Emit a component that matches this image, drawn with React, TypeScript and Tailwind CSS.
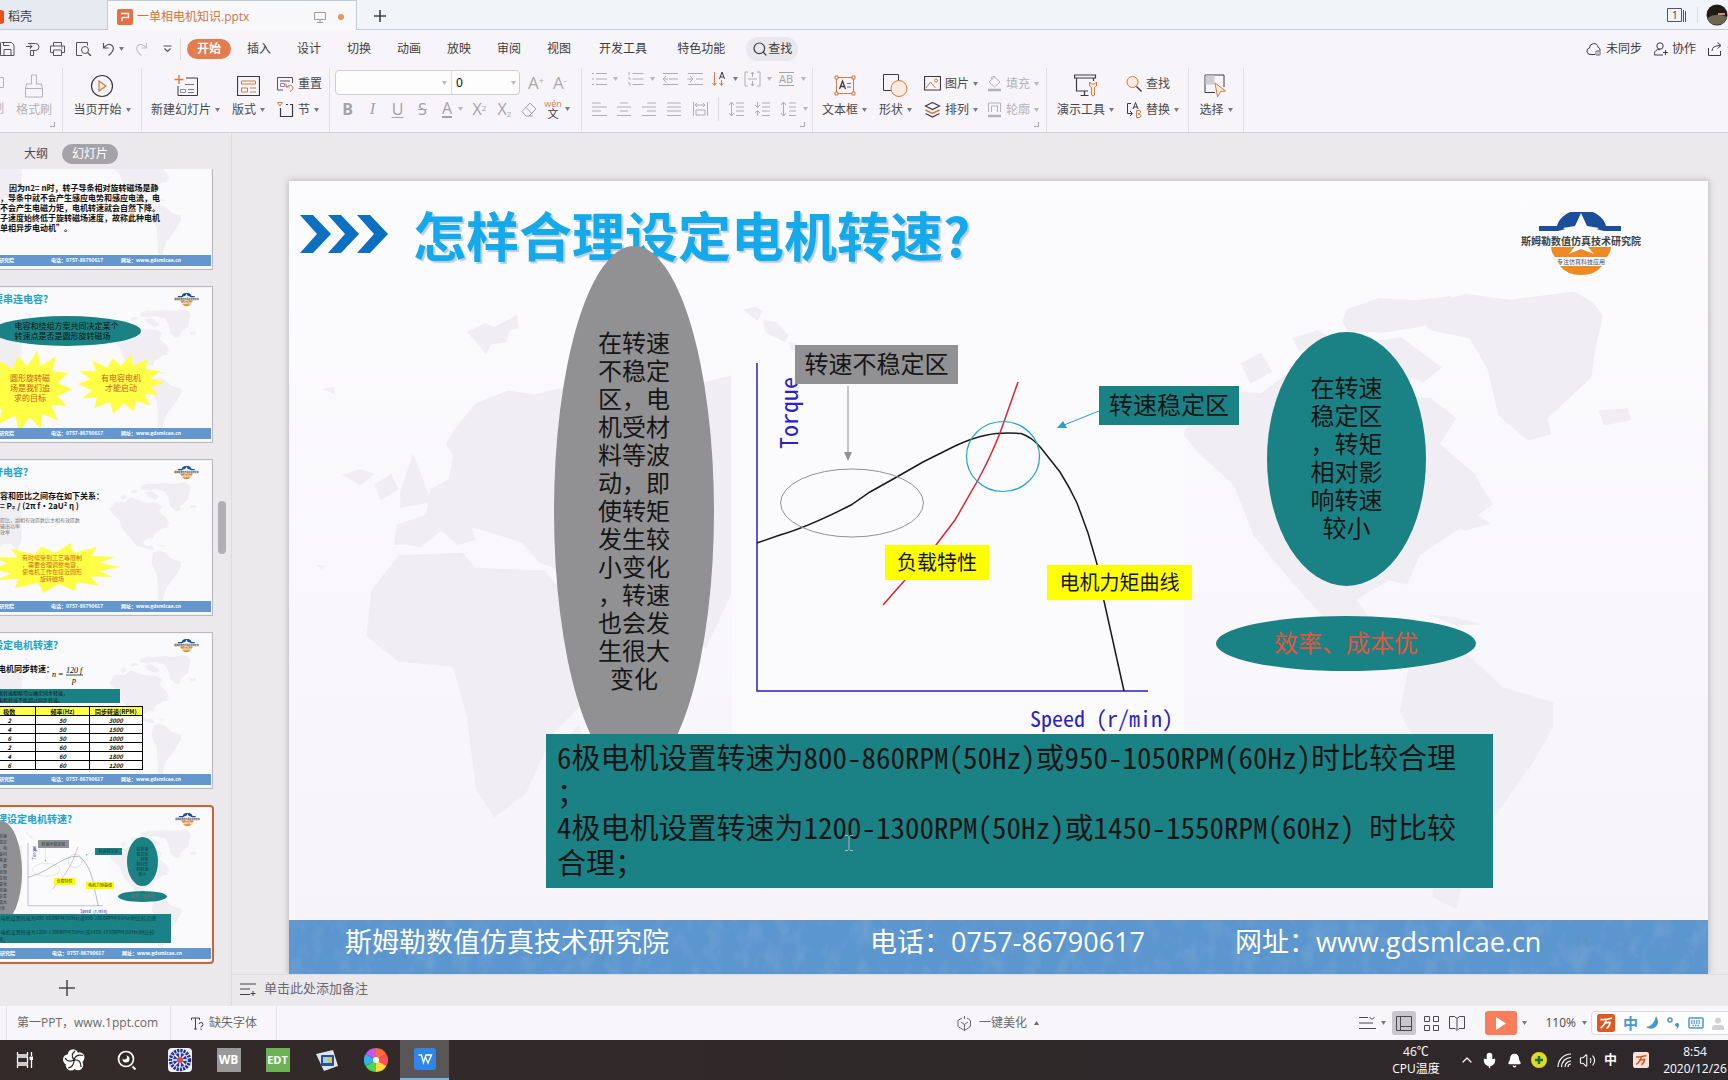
import type { ReactNode } from 'react';
import { Search, Mic, Bell, ChevronUp, Volume2 } from 'lucide-react';

const UI = "font-['Open_Sans','Noto_Sans_CJK_SC',sans-serif]";
const SONG = "font-['Noto_Sans_Mono_CJK_SC','Noto_Sans_CJK_SC',monospace] font-light";

/* ---------- small pieces ---------- */

function Caret({ dim = false }: { dim?: boolean }) {
  return (
    <svg width="5" height="4" viewBox="0 0 5 4" className={`shrink-0 ${dim ? 'text-[#b9b7bb]' : 'text-[#7b797d]'}`}>
      <path d="M0 0h5L2.5 4z" fill="currentColor" />
    </svg>
  );
}

function Ico({ w = 16, h = 16, box, className = '', children }: { w?: number; h?: number; box?: string; className?: string; children: ReactNode }) {
  return (
    <svg width={w} height={h} viewBox={box ?? `0 0 ${w} ${h}`} fill="none" stroke="currentColor" strokeWidth="1" className={`shrink-0 ${className}`}>
      {children}
    </svg>
  );
}

function BigButton({ label, icon, caret = true, dim = false }: { label: string; icon: ReactNode; caret?: boolean; dim?: boolean }) {
  return (
    <button className={`flex flex-col items-center gap-[2px] ${dim ? 'text-[#b4b2b6]' : 'text-[#4a484c]'}`}>
      <span className="flex h-6 items-center">{icon}</span>
      <span className="flex items-center gap-1 whitespace-nowrap leading-5">
        {label}
        {caret && <Caret dim={dim} />}
      </span>
    </button>
  );
}

function SmallButton({ label, icon, caret = true, dim = false }: { label: string; icon: ReactNode; caret?: boolean; dim?: boolean }) {
  return (
    <button className={`flex h-5 items-center gap-1 whitespace-nowrap ${dim ? 'text-[#b4b2b6]' : 'text-[#4a484c]'}`}>
      {icon}
      <span>{label}</span>
      {caret && <Caret dim={dim} />}
    </button>
  );
}

function Corner() {
  return (
    <Ico w={5} h={5} className="absolute bottom-[5px] right-[7px] text-[#a9a7ab]">
      <path d="M4.5 0v4.5H0" />
    </Ico>
  );
}

/* ---------- top bars ---------- */

function TabBar() {
  return (
    <header className="flex h-[30px] shrink-0 border-b border-[#c3ccd4] bg-[#f1f5f9]">
      <button className="flex w-[107px] items-center gap-1 bg-[#e6ebf2] pt-1 text-[12px] text-[#3c3c40]">
        <svg width="4" height="14" viewBox="0 0 4 14"><path d="M0 0a7 7 0 0 1 0 14z" fill="#e8501c" /></svg>
        稻壳
      </button>
      <div className="-mb-px flex w-[250px] items-center border-x border-t border-[#c3ccd4] bg-[#f8f7fa] pl-[9px] pr-3 pt-[2px] text-[12px] text-[#d2743f]">
        <svg width="16" height="16" viewBox="0 0 16 16">
          <rect width="16" height="16" rx="2" fill="#e56f45" />
          <path d="M4 4.500h7.500v4H5M5 8.500V12" stroke="#fff" strokeWidth="1.400" fill="none" />
        </svg>
        <span className="ml-1">一单相电机知识.pptx</span>
        <Ico w={12} h={12} className="ml-auto text-[#9c9a9e]">
          <path d="M.5 1.500h11v7H.5zM6 8.500v2.500M3 11.500h6" />
        </Ico>
        <span className="ml-3 size-[6px] rounded-full bg-[#e2965c]" />
      </div>
      <button aria-label="新建" className="flex w-[46px] items-center justify-center pt-[2px] text-[#444]">
        <Ico w={12} h={12}><path d="M6 0v12M0 6h12" strokeWidth="1.600" /></Ico>
      </button>
      <div className="ml-auto flex items-center">
        <Ico w={22} h={16} className="text-[#4d5563]">
          <path d="M.5 1.500h14v13H.5zM16.500 3v12M18.500 4v11" />
          <text x="5" y="12" fontSize="10" fill="#333" stroke="none" fontFamily="Open Sans, sans-serif">1</text>
        </Ico>
        <span className="ml-2 h-4 w-px bg-[#d6dade]" />
        <svg width="22" height="22" viewBox="0 0 22 22" className="ml-2">
          <circle cx="11" cy="11" r="10.500" fill="#1f1b19" />
          <path d="M1 14q10-6 20-1a10.500 10.500 0 0 1-20 1z" fill="#6b6750" />
          <path d="M12 9h7v2h-7z" fill="#c58f7c" />
        </svg>
      </div>
    </header>
  );
}

const SHORT_TABS = ['插入', '设计', '切换', '动画', '放映', '审阅', '视图'];
const LONG_TABS = ['开发工具', '特色功能'];

function MenuBar() {
  return (
    <nav className="flex h-[38px] shrink-0 items-center overflow-hidden bg-[#f7f5f9] text-[12px] text-[#3d3b3f]">
      <div className="flex w-[181px] shrink-0 items-center border-r border-[#dcdade] py-1 text-[#55535a]">
        <button aria-label="保存" className="w-[25px]"><Ico w={15} h={14}><path d="M1.500.5h10l2.500 2.500v10.500h-13.500V.5M4 13V7.500h7V13M3.500.5v3h6" /></Ico></button>
        <button aria-label="输出" className="w-[25px]"><Ico w={15} h={14}><path d="M3 1.500h7.500a3.500 3.500 0 0 1 0 7H5.500M5.500 8.500v5h3v-5M5.500 3.500v3M1 4.500h6M5 2.500l2 2-2 2" /></Ico></button>
        <button aria-label="打印" className="w-[26px]"><Ico w={15} h={14}><path d="M3.500 4V.5h8V4M3.500 10.500h-3v-6.500h14v6.500h-3M3.500 8h8v5.500h-8zM11 6h1.500" /></Ico></button>
        <button aria-label="预览" className="w-[26px]"><Ico w={16} h={14}><path d="M6 13.500H.5V.5h11v3" /><circle cx="9" cy="8" r="3.500" /><path d="m11.500 10.500 3.500 3.500" strokeWidth="1.400" /></Ico></button>
        <button aria-label="撤销" className="flex w-[33px] items-center gap-1 text-[#55535a]"><Ico w={13} h={14}><path d="M1.500 1v5h5M1.500 6q5-6 9-2 3 4-4 9.500" strokeWidth="1.200" /></Ico><Caret /></button>
        <button aria-label="恢复" className="w-[28px] text-[#c5c3c7]"><Ico w={13} h={14}><path d="M11.500 1v5h-5M11.500 6q-5-6-9-2-3 4 4 9.500" strokeWidth="1.200" /></Ico></button>
        <button aria-label="更多"><Ico w={9} h={8}><path d="M.5 1h8M1.500 3.500l3 3 3-3" strokeWidth="1.200" /></Ico></button>
      </div>
      <button className="ml-[6px] mr-[3px] h-5 w-[44px] shrink-0 rounded-full bg-[#e47c4e] font-bold text-white">开始</button>
      {SHORT_TABS.map((t) => (
        <button key={t} className="shrink-0 px-[13px]">{t}</button>
      ))}
      {LONG_TABS.map((t) => (
        <button key={t} className="shrink-0 px-[15px]">{t}</button>
      ))}
      <button className="ml-[6px] flex h-6 w-[52px] shrink-0 items-center justify-center rounded-full bg-[#e9e8ee]">
        <Search size={16} strokeWidth={1.800} />
        查找
      </button>
      <div className="ml-auto -mr-[23px] flex shrink-0 items-center gap-3">
        <button className="flex items-center gap-1">
          <Ico w={16} h={14}><path d="M9 12.500H4a3.300 3.300 0 0 1-.5-6.500 4.300 4.300 0 0 1 8.500-1 3.500 3.500 0 0 1 2 4" /><circle cx="12" cy="11" r="3" fill="#9a989d" stroke="none" /><path d="M10.500 11h3" stroke="#fff" /></Ico>
          未同步
        </button>
        <button className="flex items-center gap-1">
          <Ico w={14} h={14}><circle cx="6" cy="4" r="3.200" /><path d="M9 13H.5v-1.500q0-4 5.500-4M9 10.500h5M11.500 8v5" /></Ico>
          协作
        </button>
        <button className="flex items-center gap-1">
          <Ico w={15} h={14}><path d="M.5 6v7.500h12V9M4 9q0-5.500 8-5.500M9.500.5l3.500 3-3.500 3" /></Ico>
          分享
        </button>
      </div>
    </nav>
  );
}

function Lines({ d, w = 16 }: { d: string; w?: number }) {
  return <Ico w={w} h={16} className="text-[#b0aeb2]"><path d={d} /></Ico>;
}

function Ribbon() {
  return (
    <div className="flex h-[65px] shrink-0 overflow-hidden border-b border-[#d2d0d4] bg-[#f7f5f9] text-[12px]">
      <section className="relative flex w-[63px] shrink-0 items-center gap-3 border-r border-[#e2e0e4] pb-[7px]">
        <div className="flex w-1 flex-col justify-between gap-3 overflow-hidden text-[#b4b2b6]">
          <Ico w={4} h={12}><path d="M0 .5h3.500v10H0" /></Ico>
          <span className="-ml-2 leading-4">制</span>
        </div>
        <BigButton dim caret={false} label="格式刷" icon={<Ico w={20} h={24}><path d="M7.500 1h5v9h5l1 4.500v8.500H1.500v-8.500l1-4.500h5zM1.500 14.500h17" /></Ico>} />
        <Corner />
      </section>

      <section className="flex w-[79px] shrink-0 items-center justify-center border-r border-[#e2e0e4] pb-[7px]">
        <BigButton label="当页开始" icon={<Ico w={24} h={24}><circle cx="12" cy="12" r="10.500" strokeWidth="1.200" stroke="#3c3a3e" /><path d="M9 7v10l7-5z" stroke="#d07c42" fill="#fbeadd" strokeWidth="1.200" /></Ico>} />
      </section>

      <section className="flex w-[188px] shrink-0 items-center gap-[12px] border-r border-[#e2e0e4] pb-[7px] pl-[9px]">
        <BigButton label="新建幻灯片" icon={<Ico w={24} h={22}><path d="M4 11v9.500h19.500V3H12" stroke="#3c3a3e" /><path d="M5 0v9M.5 4.500h9" stroke="#d07c42" strokeWidth="1.400" /><path d="M11 9.500h9M14 14.500h6M14 17.500h6" stroke="#77757a" /><path d="M6.500 14.500h5v3h-5z" stroke="#8c88b8" /></Ico>} />
        <BigButton label="版式" icon={<Ico w={23} h={20}><path d="M.5.5h22v19H.5z" stroke="#3c3a3e" strokeWidth="1.200" /><path d="M4.500 5h14v3h-14zM4.500 12h6v4h-6zM13 12h6M13 16h6" stroke="#d07c42" /></Ico>} />
        <div className="flex flex-col gap-[6px]">
          <SmallButton caret={false} label="重置" icon={<Ico w={17} h={16}><path d="M6 14H.5V1.500h15V7M3 5h10" stroke="#55535a" /><path d="M3.500 7.500h4v3h-4z" stroke="#8c88b8" /><path d="M9 7.500v3.500h3.500M9 11q6-4 7 1 0 2-3 3.500" stroke="#d07c42" /></Ico>} />
          <SmallButton label="节" icon={<Ico w={17} h={16}><path d="M9 2.500h2M13 2.500h2.500v12h-12V6" stroke="#3c3a3e" strokeWidth="1.200" /><path d="M.5.5h5L3 4z" stroke="#d07c42" /></Ico>} />
        </div>
      </section>

      <section className="relative flex w-[252px] shrink-0 flex-col justify-center gap-[2px] border-r border-[#e2e0e4] pb-[9px] pl-[5px] pr-[5px]">
        <div className="flex items-center">
          <div className="flex h-[25px] w-[185px] items-center rounded-[4px] border border-[#cfcdd1] bg-[#fdfdfe]">
            <select aria-label="字体" className="h-full w-[106px] appearance-none px-1 outline-none"><option></option></select>
            <Caret dim />
            <select aria-label="字号" className="ml-[4px] h-full w-[60px] appearance-none border-l border-[#dcdade] pl-1 outline-none"><option>0</option></select>
            <Caret dim />
          </div>
          <button className="ml-[8px] w-[25px] text-left text-[17px] leading-5 text-[#aaa8ac]">A<sup className="text-[9px]">+</sup></button>
          <button className="text-[17px] leading-5 text-[#aaa8ac]">A<sup className="text-[9px]">-</sup></button>
        </div>
        <div className="flex h-6 items-center text-[16px] leading-5 text-[#a4a2a6]">
          <button className="w-[25px] font-bold">B</button>
          <button className="w-[25px] font-['Liberation_Serif',serif] italic">I</button>
          <button className="w-[25px] underline underline-offset-2">U</button>
          <button className="w-[25px] line-through">S</button>
          <button className="flex w-[32px] items-center gap-[6px] pl-[7px]"><span className="border-b-2 leading-4">A</span><Caret dim /></button>
          <button className="w-[25px]">X<sup className="text-[8px]">2</sup></button>
          <button className="w-[25px]">X<sub className="text-[8px]">2</sub></button>
          <button aria-label="清除" className="flex w-[24px] justify-center"><Ico w={16} h={15}><path d="M9 1 15 7l-7 7H5L1 9.500zM5 5.500l6 6M8 14h4" /></Ico></button>
          <button className="ml-1 flex items-center gap-1">
            <span className="flex w-4 flex-col items-center text-[9px] leading-[10px]"><span className="text-[#d07c42]">wén</span><span className="text-[11px] text-[#3c3a3e]">文</span></span>
            <Caret />
          </button>
        </div>
      </section>

      <section className="relative flex w-[231px] shrink-0 flex-col justify-center gap-[10px] border-r border-[#e2e0e4] pb-[9px] pl-[9px]">
        <div className="flex items-center gap-[6px]">
          <Lines d="M1 2.500h2M1 8h2M1 13.500h2M5 2.500h11M5 8h11M5 13.500h11" /><Caret dim />
          <Lines w={20} d="M5 1v3M4 7h2v2M4 12h2v3M8.500 2.500h11M8.500 8h11M8.500 13.500h11" /><Caret dim />
          <Lines w={18} d="M2 2.500h15M8 8h9M2 13.500h15M5 5 2 8l3 3M2 8h5" />
          <Lines w={20} d="M3 2.500h15M11 8h7M3 13.500h15M5 5l3 3-3 3M2 8h6" />
          <Ico w={16} h={16}><path d="M3.500 1v13M1.500 12l2 2.500 2-2.500M10.500 9v5M8.500 12l2 2.500 2-2.500" stroke="#d07c42" /><path d="M8.500 8l2.500-7 2.500 7M9.500 6h3" stroke="#3c3a3e" /></Ico><Caret />
          <Lines w={17} d="M4 1H1v14h3M13 1h3v14h-3M8.500 1v5M8.500 10v5M4 8h9M7 3l1.500-2L10 3M7 13l1.500 2 1.500-2" /><Caret dim />
          <Ico w={17} h={16} className="text-[#a4a2a6]"><path d="M1 1.500h15M1 14.500h15" /><text x="1" y="12" fontSize="11" fill="currentColor" stroke="none" fontFamily="Open Sans, sans-serif">AB</text></Ico><Caret dim />
        </div>
        <div className="flex items-center gap-[9px]">
          <Lines w={16} d="M1 2h9M1 6h15M1 10h9M1 14.500h15" />
          <Lines w={16} d="M4 2h8M1 6h14M4 10h8M1 14.500h14" />
          <Lines w={16} d="M6 2h9M1 6h14M6 10h9M1 14.500h14" />
          <Lines w={16} d="M1 2h14M1 6h14M1 10h14M1 14.500h14" />
          <Lines w={18} d="M2.500 1v14M16.500 1v14M4 4h10M6 2 4 4l2 2M12 2l2 2-2 2M5 9h9v5H5z" />
          <span className="h-6 w-px bg-[#dcdade]" />
          <Lines w={17} d="M3.500 1v14M1 4l2.500-3L6 4M1 12l2.500 3L6 12M8 2h8M8 6h8M8 10h8M8 14.500h8" />
          <Lines w={17} d="M3.500 1v5M1 4l2.500 2.500L6 4M3.500 15v-5M1 12l2.500-2.500L6 12M8 2h8M8 6h8M8 10h8M8 14.500h8" />
          <span className="flex items-center gap-[6px]"><Lines w={17} d="M3.500 1v14M1 4l2.500-3L6 4M1 12l2.500 3L6 12M9 2h7M9 6h7M9 10h7M9 14.500h7" /><Caret dim /></span>
        </div>
        <Corner />
      </section>

      <section className="relative flex w-[234px] shrink-0 items-center gap-3 border-r border-[#e2e0e4] pb-[7px] pl-[9px]">
        <BigButton label="文本框" icon={<Ico w={22} h={21}><path d="M2.500 2.500h17v16h-17z" stroke="#d07c42" /><path d="M1 1h3v3H1zM18 1h3v3h-3zM1 17h3v3H1zM18 17h3v3h-3z" stroke="#d07c42" fill="#f7f5f9" /><path d="M5.500 14l3-8 3 8M6.500 11.500h4" stroke="#3c3a3e" strokeWidth="1.300" /><path d="M13 8.500h4M13 12h4" stroke="#77757a" /></Ico>} />
        <BigButton label="形状" icon={<Ico w={25} h={24}><path d="M.5.5h15v16H.5z" stroke="#3c3a3e" /><circle cx="16" cy="14.500" r="8" stroke="#d07c42" fill="#fbeadd" /></Ico>} />
        <div className="flex flex-col gap-[6px]">
          <SmallButton label="图片" icon={<Ico w={17} h={15}><path d="M.5.500h16v13.500H.5z" stroke="#3c3a3e" strokeWidth="1.200" /><path d="m2 12 4.500-6 5 6" stroke="#d07c42" /><circle cx="12" cy="4.500" r="1.500" stroke="#d07c42" /></Ico>} />
          <SmallButton label="排列" icon={<Ico w={17} h={16}><path d="M8.500.5 15.500 4l-7 3.500L1.500 4z" stroke="#3c3a3e" strokeWidth="1.200" /><path d="m1.500 8 7 3.500 7-3.500" stroke="#d07c42" strokeWidth="1.500" /><path d="m1.500 11.500 7 3.500 7-3.500" stroke="#3c3a3e" strokeWidth="1.200" /></Ico>} />
        </div>
        <div className="-ml-[3px] flex flex-col gap-[6px]">
          <SmallButton dim label="填充" icon={<Ico w={15} h={16}><path d="m7.500 1 5.500 5-5.500 5L2 6zM5 3.500q-2-3 2.500-3" /><path d="M1 14h13" strokeWidth="2.500" /></Ico>} />
          <SmallButton dim label="轮廓" icon={<Ico w={15} h={16}><path d="M1.500 10V1h12v9M4.500 10V4h6v6" /><path d="M1 14h13" strokeWidth="2.500" /></Ico>} />
        </div>
        <Corner />
      </section>

      <section className="flex w-[142px] shrink-0 items-center gap-3 border-r border-[#e2e0e4] pb-[7px] pl-[10px]">
        <BigButton label="演示工具" icon={<Ico w={24} h={23}><path d="M.5 1h21v3H.5zM2.500 4v13H14M19.500 4v3M10.500 17v4M6.500 21.500h8" stroke="#3c3a3e" strokeWidth="1.200" /><path d="M15.500 8v4l2 1.500V21q1.500 2 3 0v-7.500l2-1.500V8l-2 2h-3z" stroke="#d07c42" fill="#fbeadd" /></Ico>} />
        <div className="flex flex-col gap-[6px]">
          <SmallButton caret={false} label="查找" icon={<Ico w={16} h={16}><circle cx="6.500" cy="6" r="5.500" stroke="#d07c42" fill="#fbeadd" /><path d="m10.500 10.500 5 5" stroke="#3c3a3e" strokeWidth="1.400" /></Ico>} />
          <SmallButton label="替换" icon={<Ico w={16} h={16}><path d="M5 1.500H1.500v10H6M4 9l2.500 2.500L4 14" stroke="#3c3a3e" /><path d="M7 7l2.500-6.500L12 7M8 5h3.500" stroke="#3c3a3e" /><path d="M10.500 8.500h2.500q2 0 1.500 1.700T12 12q3 0 3 1.700T13 15.500h-2.500z" stroke="#d07c42" /></Ico>} />
        </div>
      </section>

      <section className="flex w-[55px] shrink-0 items-center justify-center border-r border-[#e2e0e4] pb-[7px]">
        <BigButton label="选择" icon={<Ico w={24} h={24}><path d="M11 18.500H1V1h19v12" stroke="#3c3a3e" /><path d="M1.500 1.500h9v9h-9z" fill="#d0ced2" stroke="none" /><path d="m11 9 10.500 8-5 .5-3 5.500z" stroke="#d07c42" fill="#fbeadd" /></Ico>} />
      </section>
    </div>
  );
}

/* ---------- slide art ---------- */

function WorldMap() {
  return (
    <svg viewBox="10 2 1556 1564" preserveAspectRatio="none" className="absolute inset-0 size-full" fill="#f0eef2">
      <path d="M125 720l3-40 32-20 5-50 20-20 5-45-8-25 8-25 25-55 35-25 30 8 20-10 50-13 70 20 75-35v430l-28 110-28-70-44-10-30 50-30-30-35-100-15-10-20-40-35-20-20-10 5 25-20 10-18-28-22 32-20-5z" />
      <path d="M100 810l30-70 70-5 15 30 75 5 40 80 40 50-20 100-50 90-30 120-35 48-20-58-10-140-15-100-60-10-35-50zM310 1110l18-35 5 30-15 55-12-10z" />
      <path d="M132 615l14-75 12 55 8 40-34 12zM68 582l20-12 16 10-16 22zM205 300l20-18 10 8 25-24 2 26-10 6-4 22-16 4-6 20-10-22zM508 256l12-6 10 8-6 20zM530 276l14 4 14 26-4 14-22-20zM558 320l10 4 0 14-8-4zM104 600l18-20 8 30-20 22zM46 412l14-4 0 14zM40 760l10 0-4 8z" />
      <path d="M990 500l36-85 50 5 34-45 90 50 62 5 28 40-18 50 38 60 20 60-38 50-42 50-14 58-20-8-36 38 18 42 32-8 18 58-28-14-72-36-40-80-40-88-22-100-40-66z" />
      <path d="M1260 296l-12-30 20-22 31-20 50 12 70-16 20 20 12 28-8 60-5 62-48 80 4 32-26 12-32-50-12-92-20-60z" />
      <path d="M1170 255l35-22 40 4 38-8 10 12-26 22-14 26-42 12-40-2-6-20zM1054 362l22-22 12 38-24 24zM1110 312l28-16 18 20-38 22zM1190 320l40-10 44 60-20 30-40-28zM1446 454l32-4 4 24-30 10zM1282 660l30 0 16 18-30 14zM1256 856l32 6 30 14-28 2z" />
      <path d="M1240 940l30-22 34 20 36 62 56 30v50l-24 76-30 74-28 66-16 80-8 62-26-24 2-118-8-146-30-100z" />
    </svg>
  );
}

function Logo({ className }: { className: string }) {
  return (
    <svg viewBox="0 0 122 66" className={className}>
      <path d="M37 14A25 20 0 0 1 86 14h15v5H84l-8-2H46l-8 2H19v-5z" fill="#1a4f9c" />
      <path d="M61 1l6 13 12 2-12 7H55l-12-7 12-2z" fill="#fbfbfd" />
      <path d="M31 35h60q0 5-4 10H35q-4-5-4-10zM40 54h42q-7 9-21 9t-21-9z" fill="#ee8a23" />
      <path d="M49 42l6-8h12l7 8-13-5z" fill="#fbfbfd" />
      <text x="61" y="33" fontSize="10" fontWeight="bold" textAnchor="middle" fill="#3e4248" fontFamily="Noto Sans CJK SC, sans-serif">斯姆勒数值仿真技术研究院</text>
      <text x="61" y="52" fontSize="6" textAnchor="middle" fill="#4b4b4b" fontFamily="Noto Sans CJK SC, sans-serif">专注仿真科技应用</text>
    </svg>
  );
}

function Chart({ className, arrows = true }: { className: string; arrows?: boolean }) {
  return (
    <svg viewBox="732 353 452 381" className={className} fill="none">
      <rect x="732" y="353" width="452" height="381" fill="#fbfafd" />
      <path d="M757 363V691H1148" stroke="#2a22c8" strokeWidth="1.500" />
      <path d="M757 543L780 535Q808 527 851 505L870 492 895 478 923 462 955 446Q972 438 987 435 1000 432 1021 433.500 1032 437 1041 448L1060 472Q1070 488 1077 503L1088 533 1097 564 1104 601 1124 691" stroke="#1a1a1a" strokeWidth="1.500" />
      <path d="M1018 382L1000 433Q990 458 978 480L955 520 936 545 905 580 883 605" stroke="#e0252c" strokeWidth="1.500" />
      <ellipse cx="852" cy="503" rx="71.500" ry="34" stroke="#929095" />
      <ellipse cx="1003" cy="456.500" rx="36.500" ry="35" stroke="#22a3d4" strokeWidth="1.200" />
      {arrows && (
        <>
          <path d="M848 386V454" stroke="#919093" />
          <path d="M844 452h8l-4 9z" fill="#919093" />
          <path d="M1099 411L1064 425" stroke="#2a9cd8" />
          <path d="M1057 428l6-7 4 7z" fill="#2a9cd8" />
        </>
      )}
      <text transform="translate(798 449) rotate(-90)" fontSize="24" fill="#2a22c8" fontFamily="Noto Sans Mono CJK SC, monospace">Torque</text>
      <text x="1030" y="727" fontSize="22" fill="#2a22c8" fontFamily="Noto Sans Mono CJK SC, monospace">Speed (r/min)</text>
    </svg>
  );
}

function Slide() {
  return (
    <article className="relative flex flex-1 flex-col overflow-hidden bg-linear-to-b from-[#fcfbfe] to-[#f6f4f8] shadow-[0_0_6px_1px_#bdbbbf]">
      <WorldMap />
      <svg width="89" height="38" viewBox="0 0 89 38" className="absolute left-[11px] top-[34px]" fill="#0d6fc0">
        <path d="M0 0h13l18 19-18 19H0l17-19zM28 0h13l18 19-18 19H28l17-19zM57 0h13l18 19-18 19H57l17-19z" />
      </svg>
      <h1 className="absolute left-[124px] top-[17px] whitespace-nowrap font-['Noto_Sans_CJK_SC',sans-serif] text-[53px] font-bold leading-[72px] text-[#14a9ea] [text-shadow:2px_2px_1px_#b9cfe0]">
        怎样合理设定电机转速?
      </h1>
      <Logo className="absolute left-[1231px] top-[31px] h-[66px] w-[122px]" />
      <Chart className="absolute left-[443px] top-[172px] h-[381px] w-[452px]" />

      <div className={`${SONG} text-[24px] leading-7 text-[#161616]`}>
        <div className="absolute left-[265px] top-[65px] flex h-[531px] w-[160px] items-center justify-center rounded-[50%] bg-[#919093] pb-1">
          <p className="w-[72px] text-center">在转速<br />不稳定<br />区，电<br />机受材<br />料等波<br />动，即<br />使转矩<br />发生较<br />小变化<br />，转速<br />也会发<br />生很大<br />变化</p>
        </div>
        <div className="absolute left-[506px] top-[164px] flex h-[39px] w-[163px] items-center justify-center bg-[#919093] pb-1">转速不稳定区</div>
        <div className="absolute left-[810px] top-[205px] flex h-[39px] w-[140px] items-center justify-center bg-[#1a8285] pb-1">转速稳定区</div>
        <div className="absolute left-[978px] top-[151px] flex h-[254px] w-[159px] items-center justify-center rounded-[50%] bg-[#1a8285] pb-1">
          <p className="w-[72px] text-center">在转速<br />稳定区<br />，转矩<br />相对影<br />响转速<br />较小</p>
        </div>
        <div className="absolute left-[927px] top-[435px] flex h-[55px] w-[260px] items-center justify-center rounded-[50%] bg-[#1a8285] pb-1 text-[#e2553c]">效率、成本优</div>
        <div className="absolute left-[596px] top-[364px] flex h-[35px] w-[104px] items-center justify-center bg-[#ffff00] pb-[2px] text-[20px]">负载特性</div>
        <div className="absolute left-[758px] top-[384px] flex h-[35px] w-[145px] items-center justify-center bg-[#ffff00] pb-[2px] text-[20px]">电机力矩曲线</div>
        <div className="absolute left-[257px] top-[553px] h-[154px] w-[947px] whitespace-nowrap bg-[#1a8285] py-[5px] pl-[11px] text-[29px] leading-[35px]">
          6极电机设置转速为800-860RPM(50Hz)或950-1050RPM(60Hz)时比较合理
          <br />；<br />
          4极电机设置转速为1200-1300RPM(50Hz)或1450-1550RPM(60Hz) 时比较
          <br />
          合理；
        </div>
      </div>
      <svg width="8" height="16" viewBox="0 0 8 16" className="absolute left-[556px] top-[654px]" stroke="#a9b9b9" fill="none">
        <path d="M0 .5h3M5 .5h3M4 1v14M0 15.500h3M5 15.500h3" />
      </svg>

      <footer className={`${UI} relative mt-auto flex h-[54px] shrink-0 overflow-hidden whitespace-nowrap bg-[#5c96cf] pl-[56px] text-[27px] leading-[44px] text-white`}>
        <svg className="absolute inset-0 size-full opacity-50">
          <filter id="marble">
            <feTurbulence type="fractalNoise" baseFrequency="0.06 0.04" numOctaves="3" />
            <feColorMatrix values="0 0 0 0 0.2  0 0 0 0 0.4  0 0 0 0 0.65  2.4 0 0 0 -1.1" />
          </filter>
          <rect width="100%" height="100%" filter="url(#marble)" />
        </svg>
        <span className="relative w-[525px]">斯姆勒数值仿真技术研究院</span>
        <span className="relative w-[365px]">电话：0757-86790617</span>
        <span className="relative w-[340px]">网址：www.gdsmlcae.cn</span>
        <span className="relative text-[14px] text-[#6f8fb0]">11</span>
      </footer>
    </article>
  );
}

/* ---------- thumbnails ---------- */

function Burst({ className }: { className: string }) {
  return (
    <svg viewBox="0 0 100 100" preserveAspectRatio="none" className={className} fill="#ffff45">
      <path d="M50 20l12-20 2 20 18-12-4 18 18 2-12 12 16 8-16 8 10 12-17-1 7 19-17-8-2 18-12-14-12 18-4-20-18 10 3-18-17 2 11-13L0 50l14-8L2 28l19 1-5-18 18 12 6-16z" />
    </svg>
  );
}

function Thumb({ title, selected = false, plain = false, children }: { title?: string; selected?: boolean; plain?: boolean; children: ReactNode }) {
  return (
    <button className={`-ml-[66px] block shrink-0 p-px text-left ${selected ? 'w-[280px] rounded-[4px] border-2 border-[#c4683a] bg-[#fdeee4]' : 'w-[279px] border border-[#bbb9bd] bg-[#f1f3f8]'}`}>
      <div className="relative h-[153px] overflow-hidden bg-[#faf9fc] font-['Noto_Sans_CJK_SC',sans-serif] text-[8px] leading-[10px] text-[#111]">
        <WorldMap />
        {title && <span className={`absolute top-[3px] whitespace-nowrap text-[10px] font-bold leading-4 text-[#22a3cf] ${selected ? 'left-[30px]' : 'left-[17px]'}`}>{title}</span>}
        {!plain && <Logo className="absolute left-[238px] top-[5px] h-[14px] w-[25px]" />}
        {children}
        <div className="absolute inset-x-0 bottom-[2px] flex h-[11px] whitespace-nowrap bg-[#6497cd] text-[5px] font-bold text-white">
          <span className="w-[115px] pl-[18px]">斯姆勒数值仿真技术研究院</span>
          <span className="w-[70px]">电话：0757-86790617</span>
          <span>网址：www.gdsmlcae.cn</span>
        </div>
      </div>
    </button>
  );
}

const SPEEDS = [
  [2, 50, 3000],
  [4, 50, 1500],
  [6, 50, 1000],
  [2, 60, 3600],
  [4, 60, 1800],
  [6, 60, 1200],
];

function ThumbPane() {
  return (
    <aside className={`${UI} flex w-[232px] shrink-0 flex-col overflow-hidden border-r border-[#dddbdf] bg-[#ebe9ec]`}>
      <div className="flex h-9 shrink-0 items-center pl-6 pt-[6px] text-[12px] text-[#4a484c]">
        <button>大纲</button>
        <button className="ml-[14px] h-5 w-[56px] rounded-full bg-[#a5a3a8] text-white">幻灯片</button>
      </div>
      <div className="relative min-h-0 flex-1 basis-0 overflow-hidden">
        <div className="-mt-[56px] flex flex-col gap-4">
          <Thumb plain>
            <p className="absolute left-[64px] top-[68px] whitespace-nowrap font-bold">
              <span className="pl-[9px]">因为n2= n时，转子导条相对旋转磁场是静</span><br />
              ，导条中就不会产生感应电势和感应电流，电<br />
              不会产生电磁力矩，电机转速就会自然下降。<br />
              子速度始终低于旋转磁场速度，故称此种电机<br />
              单相异步电动机”。
            </p>
          </Thumb>
          <Thumb title="为什么需要串连电容?">
            <div className="absolute left-[56px] top-[28px] flex h-[30px] w-[149px] items-center justify-center rounded-[50%] bg-[#1a8285]">电容和绕组方案共同决定某个<br />转速点是否是圆形旋转磁场</div>
            <Burst className="absolute left-[46px] top-[62px] h-[82px] w-[90px]" />
            <Burst className="absolute left-[142px] top-[66px] h-[60px] w-[86px]" />
            <p className="absolute left-[74px] top-[85px] text-center text-[#cf5a1e]">圆形旋转磁<br />场是我们追<br />求的目标</p>
            <p className="absolute left-[165px] top-[85px] text-center text-[#cf5a1e]">有电容电机<br />才能启动</p>
          </Thumb>
          <Thumb title="如何选择好电容?">
            <p className="absolute left-[64px] top-[30px] whitespace-nowrap font-bold">容和匝比之间存在如下关系：<br />= P₂ / (2π f·2aU² η )</p>
            <p className="absolute left-[64px] top-[56px] whitespace-nowrap text-[5px] leading-[6px] text-[#777]">匝比，副相有效匝数比主相有效匝数<br />输出功率<br />效率</p>
            <Burst className="absolute left-[54px] top-[82px] h-[50px] w-[130px]" />
            <p className="absolute left-[86px] top-[93px] whitespace-nowrap text-center text-[6px] leading-[7px] text-[#cf6a1e]">有时候受到工艺等限制<br />，需要合理调整电容，<br />使电机工作在接近圆形<br />旋转磁场</p>
          </Thumb>
          <Thumb title="怎样合理设定电机转速?">
            <p className="absolute left-[62px] top-[30px] whitespace-nowrap font-bold">电机同步转速：</p>
            <svg viewBox="0 0 32 22" className="absolute left-[116px] top-[30px] h-[22px] w-[32px]" fontFamily="Liberation Serif, serif" fontSize="8" fontStyle="italic">
              <text x="0" y="13">n =</text><path d="M14 11h17" stroke="#222" strokeWidth=".8" /><text x="14" y="9">120 f</text><text x="20" y="19">p</text>
            </svg>
            <p className="absolute left-0 top-[55px] h-[14px] w-[184px] bg-[#1a8285] pl-[62px] text-[5px] leading-[7px]">据转速粗略可以确定同步转速，<br />电机转速不能超过同步转速。</p>
            <table className="absolute left-[46px] top-[72px] w-[161px] table-fixed border-collapse bg-white text-center text-[6px] leading-[7px]">
              <thead>
                <tr className="h-[9px] bg-[#ffff45]">
                  {['极数', '频率(Hz)', '同步转速(RPM)'].map((h) => <th key={h} className="border border-black p-0">{h}</th>)}
                </tr>
              </thead>
              <tbody>
                {SPEEDS.map((row, i) => (
                  <tr key={i} className="h-[9px]">
                    {row.map((v, j) => <td key={j} className="border border-black p-0 font-bold italic">{v}</td>)}
                  </tr>
                ))}
              </tbody>
            </table>
          </Thumb>
          <Thumb title="怎样合理设定电机转速?" selected>
            <Chart className="absolute left-[86px] top-[33px] h-[73px] w-[87px]" />
            <div className="text-[4px] leading-[5px] text-[#0d3b3d]">
              <p className="absolute left-[43px] top-[13px] flex h-[102px] w-[42px] items-center justify-center whitespace-pre rounded-[50%] bg-[#919093] text-center leading-[6px] text-[#333]">{'在转速\n不稳定\n区，电\n机受材\n料等波\n动，即\n使转矩\n发生较\n小变化\n，转速\n也会发\n生很大\n变化'}</p>
              <span className="absolute left-[101px] top-[32px] h-[8px] w-[31px] bg-[#919093] text-center leading-[8px]">转速不稳定区</span>
              <span className="absolute left-[158px] top-[40px] h-[7px] w-[27px] bg-[#1a8285] text-center leading-[7px]">转速稳定区</span>
              <p className="absolute left-[190px] top-[29px] flex h-[49px] w-[31px] items-center justify-center whitespace-pre rounded-[50%] bg-[#1a8285] text-center">{'在转速\n稳定区\n，转矩\n相对影\n响转速\n较小'}</p>
              <span className="absolute left-[181px] top-[83px] h-[11px] w-[49px] rounded-[50%] bg-[#1a8285] text-center leading-[11px] text-[#b0604c]">效率、成本优</span>
              <span className="absolute left-[117px] top-[70px] h-[7px] w-[21px] bg-[#ffff00] text-center leading-[7px]">负载特性</span>
              <span className="absolute left-[149px] top-[74px] h-[7px] w-[28px] bg-[#ffff00] text-center leading-[7px]">电机力矩曲线</span>
              <p className="absolute left-[50px] top-[106px] h-[29px] w-[184px] whitespace-nowrap bg-[#1a8285] pl-[6px] text-[5px] leading-[7px]">6极电机设置转速为800-860RPM(50Hz)或950-1050RPM(60Hz)时比较合理<br />；<br />4极电机设置转速为1200-1300RPM(50Hz)或1450-1550RPM(60Hz)时比较<br />合理；</p>
            </div>
          </Thumb>
        </div>
        <span className="absolute right-[5px] top-[332px] h-[53px] w-[8px] rounded-full bg-[#b1afb3]" />
      </div>
      <button aria-label="新建幻灯片" className="flex h-[37px] w-[134px] shrink-0 items-center justify-center text-[#4a484c]">
        <Ico w={16} h={16}><path d="M8 0v16M0 8h16" strokeWidth="1.500" /></Ico>
      </button>
    </aside>
  );
}

/* ---------- bottom bars ---------- */

function WanLogo({ size, bg, fg }: { size: number; bg: string; fg: string }) {
  return (
    <svg width={size} height={size} viewBox="0 0 18 18" className="shrink-0">
      <rect width="18" height="18" rx="2.500" fill={bg} />
      <path d="M3.500 5.500q6 .5 11.500-1.500M9.500 5.500q-2 6-6 8.500M7 9.500q4-1.500 6-1-.5 4-3.500 6" stroke={fg} strokeWidth="1.800" fill="none" />
    </svg>
  );
}

function StatusBar() {
  return (
    <div className="flex h-[34px] shrink-0 items-center overflow-hidden bg-[#f8f6fa] text-[12px] text-[#6a686c]">
      <span className="ml-[6px] flex h-full w-[165px] shrink-0 items-center whitespace-nowrap border-x border-[#e6e4e8] pl-[10px]">第一PPT，www.1ppt.com</span>
      <button className="flex h-full w-[106px] items-center gap-[5px] border-r border-[#e6e4e8] pl-[20px]">
        <Ico w={13} h={13} className="text-[#444]"><path d="M.5 3V1h8v2M4.500 1v11M3 12h3" /><path d="M8 7q0-1.500 2-1.500T12 7.500 10 9.500v1M10 11.500v1.500" /></Ico>
        缺失字体
      </button>
      <button className="ml-[680px] flex items-center gap-[7px]">
        <Ico w={15} h={15}><path d="M5 2 1 4.500v6l6.500 4 6-4v-6L10 2M4 6l3.500 2.500L11 6M7.500 8.500v6M7.500 0v3" /></Ico>
        <span>一键美化</span>
        <svg width="5" height="4" viewBox="0 0 5 4"><path d="M0 4h5L2.500 0z" fill="#6a686c" /></svg>
      </button>
      <div className="ml-auto flex shrink-0 items-center text-[#4a484c]">
        <button aria-label="备注" className="flex items-center gap-[5px]"><Ico w={17} h={14}><path d="M0 1.500h9M0 7h14M0 12.500h17M10.500 1l2.500 2.500L15.500 1" /></Ico><Caret /></button>
        <button aria-label="普通视图" className="ml-[6px] flex size-6 items-center justify-center rounded-[3px] bg-[#c9c7cc]"><Ico w={16} h={15}><path d="M.5.500h15v14H.5zM4.500.5v14M4.500 10.500h11" /></Ico></button>
        <button aria-label="浏览" className="ml-2"><Ico w={15} h={15}><path d="M.5.500h5v5h-5zM9.500.500h5v5h-5zM.5 9.500h5v5h-5zM9.500 9.500h5v5h-5z" /></Ico></button>
        <button aria-label="阅读" className="ml-[10px]"><Ico w={16} h={15}><path d="M.5.500h5L8 2.500l2.500-2h5v12h-5.500l-2 2-2-2H.5zM8 2.500v11" /></Ico></button>
        <button aria-label="放映" className="ml-[20px] flex h-6 w-8 items-center justify-center rounded-[3px] bg-[#fa7d5c]"><svg width="10" height="13" viewBox="0 0 10 13"><path d="M0 0v13l10-6.500z" fill="#fff" /></svg></button>
        <span className="ml-[5px] mr-[18px]"><Caret /></span>
        <button className="flex items-center gap-[6px]">110%<Caret /></button>
        <div className="ml-1 -mr-1 flex h-6 w-[141px] items-center gap-[8px] rounded-l-[4px] border border-[#d6dbe4] bg-white pl-[5px] text-[#4a97cf]">
          <WanLogo size={18} bg="#e2561f" fg="#fff" />
          <span className="text-[15px] font-bold leading-5">中</span>
          <svg width="13" height="14" viewBox="0 0 13 14"><path d="M10 0q5 8-2 12-4 2-8-1 8-1 10-11z" fill="#4a97cf" /></svg>
          <svg width="13" height="14" viewBox="0 0 13 14"><circle cx="3" cy="4" r="2" fill="none" stroke="#4a97cf" strokeWidth="1.500" /><path d="M8 8.500a2 2 0 1 1 4 1q-.5 3-3 4 1-1.500 1-2.500-2-.5-2-2.500z" fill="#4a97cf" /></svg>
          <Ico w={16} h={12}><rect x="1" y="1" width="14" height="10" rx="1" strokeWidth="1.500" /><path d="M3 4h10M3 6h10M4.500 8.500h7" strokeDasharray="1.500 1" strokeWidth="1.300" /></Ico>
          <svg width="12" height="13" viewBox="0 0 12 13" fill="#d3d1d6"><circle cx="6" cy="3.500" r="3" /><path d="M0 13V11q0-3 3-3h6q3 0 3 3v2z" /></svg>
        </div>
      </div>
    </div>
  );
}

const TASK = 'flex h-full w-[49px] shrink-0 items-center justify-center';

function Taskbar() {
  return (
    <footer className="flex h-10 shrink-0 items-center overflow-hidden bg-linear-to-r from-[#332a29] to-[#2d282b] text-[12px] text-white">
      <button aria-label="任务视图" className={TASK}><Ico w={17} h={16}><path d="M1.500 0v3h10V0M1.500 5h10v6h-10zM1.500 16v-3h10v3M15.500 0v4M15.500 8v8" strokeWidth="1.300" /><path d="M14 5h3v2.500h-3z" fill="#fff" /></Ico></button>
      <button aria-label="应用" className={TASK}>
        <svg width="22" height="22" viewBox="0 0 22 22">
          <g fill="#fff"><circle cx="10" cy="5.500" r="5.200" /><circle cx="16.300" cy="8.500" r="5.200" /><circle cx="15" cy="16" r="5.200" /><circle cx="8" cy="16.300" r="5.200" /><circle cx="5.200" cy="10.500" r="5.200" /></g>
          <path d="M11 11Q7 6 12 2M11 11q1-6 9-4.500M11 11q7-1 7 7M11 11q0 7-6 8M11 11q-6 3-9-2" fill="none" stroke="#2e2829" strokeWidth="1.200" />
        </svg>
      </button>
      <button aria-label="搜索" className={`${TASK} ml-1`}><Ico w={20} h={20}><circle cx="9" cy="9" r="7.500" strokeWidth="1.700" /><path d="m15.500 16.500 3 3" strokeWidth="2" /><circle cx="9" cy="9" r="3.500" fill="#fff" stroke="none" /><circle cx="7.500" cy="7" r="2.500" fill="#2e2829" stroke="none" /></Ico></button>
      <button aria-label="电机仿真" className={`${TASK} ml-1`}>
        <svg width="24" height="24" viewBox="0 0 24 24">
          <rect width="24" height="24" rx="4" fill="#eef0fa" />
          <circle cx="12" cy="12" r="9.500" fill="none" stroke="#1f2f9a" strokeWidth="3.500" strokeDasharray="2.200 1" />
          <circle cx="12" cy="12" r="7" fill="#27379c" />
          <path d="M12 5v14M5 12h14M7 7l10 10M17 7 7 17" stroke="#fff" strokeWidth="1.500" />
          <circle cx="12" cy="12" r="3" fill="#e04a4a" />
        </svg>
      </button>
      <button className={TASK}><span className="flex size-6 items-center justify-center bg-[#9b9a9b] text-[12px] font-bold">WB</span></button>
      <button className={TASK}><span className="flex size-6 items-center justify-center bg-[#6fb157] text-[11px] font-bold">EDT</span></button>
      <button aria-label="录屏" className={TASK}>
        <svg width="24" height="22" viewBox="0 0 24 22"><path d="M1 5 18 1l5 16-14 5z" fill="#dfe4ea" /><rect x="6" y="6" width="13" height="11" rx="1" fill="#1f4fa5" /><rect x="8" y="8" width="8" height="6" fill="#9fd0e8" /><path d="M13 8h4v6h-4z" fill="#d9c44a" /></svg>
      </button>
      <button aria-label="浏览器" className={TASK}>
        <svg width="24" height="24" viewBox="0 0 24 24">
          <path d="M12 12V0a12 12 0 0 1 10.400 6z" fill="#ff6a3a" /><path d="M12 12 22.400 6a12 12 0 0 1 0 12z" fill="#ff4d5a" /><path d="M12 12l10.400 6A12 12 0 0 1 12 24z" fill="#ffd93a" /><path d="M12 12v12A12 12 0 0 1 1.600 18z" fill="#4fd34a" /><path d="M12 12 1.600 18a12 12 0 0 1 0-12z" fill="#2fb5ee" /><path d="M12 12 1.600 6A12 12 0 0 1 12 0z" fill="#c657e8" /><circle cx="12" cy="12" r="3" fill="#fff" />
        </svg>
      </button>
      <button aria-label="WPS" className={`${TASK} border-b-2 border-[#76b4e4] bg-[#5a5658]`}>
        <svg width="22" height="22" viewBox="0 0 22 22"><rect width="22" height="22" rx="3" fill="#2f86e8" /><path d="M4.500 7h3l2 7.500L12 7h5.500l-3.500 8-2.500-6" stroke="#fff" strokeWidth="1.400" fill="none" /></svg>
      </button>
      <div className="ml-auto -mr-[3px] flex shrink-0 items-center">
        <div className="w-[50px] text-center leading-[17px]">46℃<br />CPU温度</div>
        <ChevronUp size={16} className="ml-[18px]" strokeWidth={1.800} />
        <Mic size={17} fill="#fff" className="ml-[6px]" />
        <Bell size={15} fill="#fff" className="ml-[9px]" />
        <svg width="16" height="16" viewBox="0 0 16 16" className="ml-[9px]"><circle cx="8" cy="8" r="8" fill="#e8d81e" /><circle cx="8" cy="8" r="5.500" fill="#cbe03a" /><path d="M8 4v8M4 8h8" stroke="#22702a" strokeWidth="2.500" /></svg>
        <Ico w={15} h={15} className="ml-[10px]"><path d="M1 14A13 13 0 0 1 14 1M4.500 14A9.500 9.500 0 0 1 14 4.500M8 14a6 6 0 0 1 6-6M11 14a3 3 0 0 1 3-3" strokeWidth="1.200" /></Ico>
        <Volume2 size={17} className="ml-[7px]" strokeWidth={1.500} />
        <span className="ml-[8px] text-[13px] font-bold">中</span>
        <span className="ml-[16px]"><WanLogo size={16} bg="#fbe3da" fg="#e2561f" /></span>
        <div className="ml-[11px] mr-px w-[70px] text-center leading-[17px]">8:54<br />2020/12/26</div>
      </div>
    </footer>
  );
}

export default function App() {
  return (
    <div className={`${UI} flex h-screen w-full flex-col overflow-hidden bg-[#ebe9ec]`}>
      <TabBar />
      <MenuBar />
      <Ribbon />
      <div className="flex min-h-0 flex-1">
        <ThumbPane />
        <main className="flex min-w-0 flex-1 flex-col">
          <div className="flex min-h-0 flex-1 overflow-hidden pl-[57px] pr-5 pt-12">
            <Slide />
          </div>
          <div className="flex h-8 shrink-0 items-center gap-2 border-t border-[#dddbdf] bg-[#ebe9ec] pb-[3px] pl-2 text-[13px] text-[#6a686c]">
            <Ico w={16} h={13} className="text-[#444]"><path d="M0 1h16M0 6h10M0 11.500h10M13 8v5M10.500 10.500h5" /></Ico>
            单击此处添加备注
          </div>
        </main>
      </div>
      <StatusBar />
      <Taskbar />
    </div>
  );
}
